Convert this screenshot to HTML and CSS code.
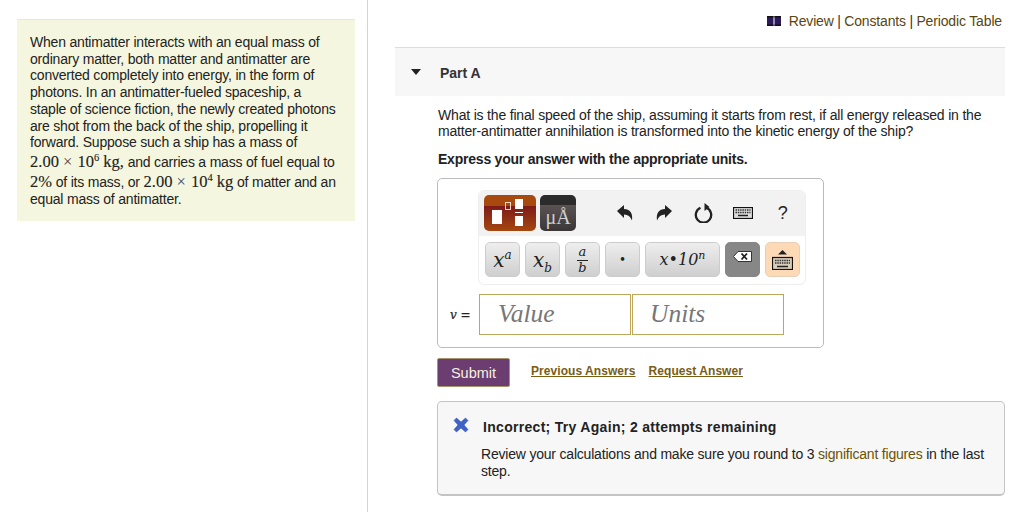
FILE: index.html
```html
<!DOCTYPE html>
<html lang="en">
<head>
  <meta charset="UTF-8" />
  <title>Part A</title>
  <link rel="stylesheet" href="styles.css">
</head>
<body>
  <div class="page">
    <aside class="side">
      <div class="intro">
        <p>When antimatter interacts with an equal mass of<br>ordinary matter, both matter and antimatter are<br>converted completely into energy, in the form of<br>photons. In an antimatter-fueled spaceship, a<br>staple of science fiction, the newly created photons<br>are shot from the back of the ship, propelling it<br>forward. Suppose such a ship has a mass of</p>
        <p class="mathline"><span class="math">2.00 <i class="times">×</i> 10<sup>6</sup> kg,</span> and carries a mass of fuel equal to</p>
        <p class="mathline"><span class="math">2%</span> of its mass, or <span class="math">2.00 <i class="times">×</i> 10<sup>4</sup> kg</span> of matter and an</p>
        <p>equal mass of antimatter.</p>
      </div>
    </aside>

    <main class="main">
      <nav class="toplinks">
        <svg class="book" width="14" height="10" viewBox="0 0 14 10"><path d="M0 0h6.500v10H0zM7.500 0H14v10H7.500z" fill="#2d1a5c"/><path d="M0 0h6.500v1.500H0zM7.500 0H14v1.500H7.500zM0 8.500h6.500V10H0zM7.500 8.500H14V10H7.500z" fill="#111"/></svg>
        <a href="#">Review</a> <span class="sep">|</span> <a href="#">Constants</a> <span class="sep">|</span> <a href="#">Periodic Table</a>
      </nav>

      <div class="part-head">
        <span class="caret"></span>
        <span class="part-title">Part A</span>
      </div>

      <div class="part-body">
        <p class="question">What is the final speed of the ship, assuming it starts from rest, if all energy released in the<br>matter-antimatter annihilation is transformed into the kinetic energy of the ship?</p>
        <p class="express">Express your answer with the appropriate units.</p>

        <div class="answer-box">
          <div class="editor">
            <div class="tools">
              <button class="mode mode-templates">
                <svg width="52" height="35" viewBox="0 0 52 35"><rect x="8" y="15" width="10" height="14" fill="#fff"/><rect x="21.500" y="7.500" width="5" height="7" fill="none" stroke="#f3d9c0" stroke-width="1"/><rect x="31" y="4" width="8" height="10" fill="#fff"/><rect x="31" y="17" width="8" height="1" fill="#fff"/><rect x="31" y="21" width="8" height="10" fill="#fff"/></svg>
              </button>
              <button class="mode mode-units">μÅ</button>
              <div class="tool-icons">
                <svg width="16" height="16" viewBox="0 0 16 16"><path d="M0 6 7 0v4c6 0 9 4 8 11.500C13.500 11.500 11 9.500 7 9.500V13z" fill="#222"/></svg>
                <svg width="16" height="16" viewBox="0 0 16 16"><path d="M16 6 9 0v4c-6 0-9 4-8 11.500C2.500 11.500 5 9.500 9 9.500V13z" fill="#222"/></svg>
                <svg width="19" height="20" viewBox="0 0 19 20"><path d="M6.500 4.800a7.700 7.700 0 1 0 6 0" fill="none" stroke="#222" stroke-width="2.300"/><path d="M10.500 0v8l5-4z" fill="#222"/></svg>
                <svg width="20" height="12" viewBox="0 0 20 12"><rect x=".5" y=".5" width="19" height="11" fill="#ddd" stroke="#111" stroke-width="1.200"/><path d="M2.500 3h15M2.500 5.500h15" stroke="#333" stroke-width="1.500" stroke-dasharray="1.500 .8"/><path d="M5 8.500h10" stroke="#222" stroke-width="1.500"/></svg>
                <span class="help">?</span>
              </div>
            </div>
            <div class="keys">
              <button class="key"><span><i>x</i><sup>a</sup></span></button>
              <button class="key"><span><i>x</i><sub>b</sub></span></button>
              <button class="key frac"><i class="num">a</i><i class="den">b</i></button>
              <button class="key dot">•</button>
              <button class="key wide"><span><i>x•10<sup>n</sup></i></span></button>
              <button class="key back">
                <svg width="19" height="11" viewBox="0 0 19 11"><path d="M5 .500h13.500v10H5L.5 5.500z" fill="#fff" stroke="#333"/><path d="M8.500 2.500l5.500 6M14 2.500l-5.500 6" stroke="#222" stroke-width="1.800"/></svg>
              </button>
              <button class="key kbd">
                <svg width="21" height="20" viewBox="0 0 21 20"><path d="M10.500 0 15 4.500H6z" fill="#222"/><rect x=".5" y="7.500" width="20" height="12" fill="#d8cdb8" stroke="#111" stroke-width="1.200"/><path d="M3 10.500h15M3 13h15" stroke="#333" stroke-width="1.500" stroke-dasharray="1.500 .8"/><path d="M5 16.500h11" stroke="#222" stroke-width="1.500"/></svg>
              </button>
            </div>
          </div>
          <div class="inputs">
            <span class="var"><i>v</i> =</span>
            <div class="field field-value">Value</div>
            <div class="field field-units">Units</div>
          </div>
        </div>

        <div class="actions">
          <button class="submit">Submit</button>
          <a class="action-link" href="#">Previous Answers</a>
          <a class="action-link" href="#">Request Answer</a>
        </div>

        <div class="feedback">
          <div class="feedback-head">
            <svg class="cross" width="16" height="16" viewBox="0 0 16 16"><path d="M3.500 1 8 5l4.500-4L15 3.500 11 8l4 4.500-2.500 2.500L8 11l-4.500 4L1 12.500 5 8 1 3.500z" fill="#3f62c8" stroke="#2f4ca8" stroke-width=".5"/></svg>
            <strong>Incorrect; Try Again; 2 attempts remaining</strong>
          </div>
          <p class="feedback-text">Review your calculations and make sure you round to 3 <a href="#">significant figures</a> in the last<br>step.</p>
        </div>
      </div>
    </main>
  </div>
</body>
</html>
```

FILE: styles.css
```css
/* general */
* {
  box-sizing: border-box;
}
html, body {
  margin: 0;
  height: 512px;
  overflow: hidden;
}
body {
  font-family: "Liberation Sans", Arial, sans-serif;
  font-size: 14px;
  color: #222;
  background: #fff;
}
p {
  margin: 0;
}
button {
  font-family: inherit;
  padding: 0;
}
.page {
  display: flex;
  height: 512px;
}

/* left column */
.side {
  width: 368px;
  height: 512px;
  padding: 19px 12px 0 17px;
  border-right: 1px solid #d4d4d4;
  flex: none;
}
.intro {
  background: #f5f6df;
  border-top: 1px solid #e9e9cf;
  height: 202px;
  padding: 14px 10px 0 13px;
  line-height: 16.700px;
  font-size: 14px;
  letter-spacing: -0.200px;
  white-space: nowrap;
}
.mathline {
  line-height: 20px;
  height: 20px;
  position: relative;
  top: 1px;
}
.math {
  font-family: "Liberation Serif", serif;
  font-size: 16.500px;
  letter-spacing: 0;
  -webkit-text-stroke: 0.120px #222;
}
.math sup {
  font-size: 10.500px;
  line-height: 0;
}
.times {
  font-style: normal;
  color: #444;
  -webkit-text-stroke: 0;
  margin: 0 1px 0 0;
}

/* right column */
.main {
  width: 656px;
  padding-left: 27px;
}
.toplinks {
  height: 47px;
  padding: 13px 22px 0 0;
  display: flex;
  justify-content: flex-end;
  align-items: flex-start;
  gap: 3.500px;
  line-height: 17px;
  letter-spacing: -0.150px;
}
.toplinks a {
  color: #5a4510;
  text-decoration: none;
}
.sep {
  color: #333;
}
.book {
  margin: 3px 4px 0 0;
}
.part-head {
  width: 610px;
  height: 49px;
  background: #f7f7f7;
  border-top: 1px solid #ddd;
  display: flex;
  align-items: center;
  padding: 2px 0 0 16px;
}
.caret {
  width: 0;
  height: 0;
  border-left: 5px solid transparent;
  border-right: 5px solid transparent;
  border-top: 6px solid #222;
  margin-top: -3px;
}
.part-title {
  margin-left: 19px;
  font-weight: bold;
  color: #333;
  font-size: 14px;
  letter-spacing: 0;
}
.part-body {
  padding-left: 43px;
  width: 610px;
}
.question {
  margin-top: 11px;
  line-height: 16px;
  white-space: nowrap;
  letter-spacing: -0.185px;
}
.express {
  margin-top: 12px;
  font-weight: bold;
  line-height: 16px;
  letter-spacing: -0.220px;
}

/* answer box */
.answer-box {
  width: 387px;
  height: 170px;
  margin: 11px 0 0 -1px;
  border: 1px solid #bbb;
  border-radius: 5px;
  padding: 11px 0 0 40px;
}
.editor {
  width: 328px;
  height: 95px;
  border: 1px solid #eee;
  border-radius: 6px;
  overflow: hidden;
}
.tools {
  height: 45px;
  background: #f2f2f2;
  display: flex;
  align-items: flex-start;
  padding: 4px 0 0 5px;
}
.mode {
  height: 36px;
  border: none;
  border-radius: 5px;
}
.mode-templates {
  width: 52px;
  background: linear-gradient(#a84a10 0 30%, #7e1a1a 30%, #a5480f);
  margin-right: 4px;
}
.mode-units {
  width: 36px;
  color: #cfcfcf;
  font-family: "Liberation Serif", serif;
  font-size: 20px;
  padding-top: 8px;
  line-height: 20px;
  background: linear-gradient(#2b2b2b 0 28%, #5a5253 28%, #3a3637);
}
.tool-icons {
  display: grid;
  grid-template-columns: repeat(5, 39.500px);
  align-items: center;
  justify-items: center;
  height: 36px;
  margin-left: 29px;
}
.help {
  font-size: 18px;
  color: #222;
}
.keys {
  display: flex;
  padding: 6px 0 0 6px;
  gap: 5px;
  background: #fff;
}
.key {
  width: 35px;
  height: 35px;
  border: 1px solid #ccc;
  border-radius: 5px;
  background: linear-gradient(#eee, #cfcfcf);
  font-family: "DejaVu Serif", serif;
  font-size: 20px;
  color: #222;
  display: flex;
  align-items: center;
  justify-content: center;
}
.key sup, .key sub {
  font-size: 12px;
  font-style: italic;
  line-height: 0;
}
.frac {
  flex-direction: column;
  font-size: 13px;
  line-height: 14px;
}
.num {
  border-bottom: 1px solid #222;
  padding: 0 2px 1px;
}
.dot {
  font-size: 12px;
}
.wide {
  width: 75px;
  font-size: 16px;
}
.wide sup {
  font-size: 11px;
}
.back {
  background: #878787;
  border-color: #878787;
}
.back svg {
  margin-top: -6px;
}
.kbd {
  background: #fdd9b5;
  border-color: #e8d0b8;
}
.inputs {
  display: flex;
  align-items: stretch;
  height: 41px;
  margin: 9px 0 0 1px;
}
.var {
  position: relative;
  width: 0;
  white-space: nowrap;
  align-self: center;
  left: -29px;
  font-family: "DejaVu Serif", serif;
  font-size: 12px;
  -webkit-text-stroke: 0.200px #222;
}
.field {
  border: 1px solid #bfa65a;
  font-family: "Liberation Serif", serif;
  font-style: italic;
  font-size: 25.500px;
  color: #777;
  line-height: 38px;
}
.field-value {
  width: 152px;
  padding-left: 18px;
}
.field-units {
  width: 152px;
  margin-left: 1px;
  padding-left: 17px;
}

/* actions */
.actions {
  display: flex;
  align-items: flex-start;
  margin: 10px 0 0 -1px;
  height: 30px;
}
.submit {
  width: 73px;
  height: 29px;
  background: #6c3d70;
  color: #f6efe0;
  border: 1px solid #a8946a;
  border-radius: 2px;
  font-size: 14.500px;
  margin-right: 21px;
}
.action-link {
  margin-top: 6px;
  font-size: 12px;
  line-height: 14px;
  font-weight: bold;
  color: #7a5c14;
  margin-right: 13px;
  letter-spacing: 0.060px;
}

/* feedback */
.feedback {
  width: 568px;
  height: 95px;
  margin: 13px 0 0 -1px;
  background: #f7f7f7;
  border: 1px solid #c4c4c4;
  border-bottom-width: 2px;
  border-radius: 5px;
  padding: 16px 16px 0 15px;
}
.feedback-head {
  display: flex;
  align-items: center;
  height: 17px;
}
.feedback-head strong {
  margin-left: 14px;
  letter-spacing: 0.300px;
}
.cross {
  flex: none;
  margin-top: -3px;
}
.feedback-text {
  margin: 11px 0 0 28px;
  line-height: 17px;
  letter-spacing: -0.200px;
  white-space: nowrap;
}
.feedback-text a {
  color: #6b5200;
  text-decoration: none;
}
```
